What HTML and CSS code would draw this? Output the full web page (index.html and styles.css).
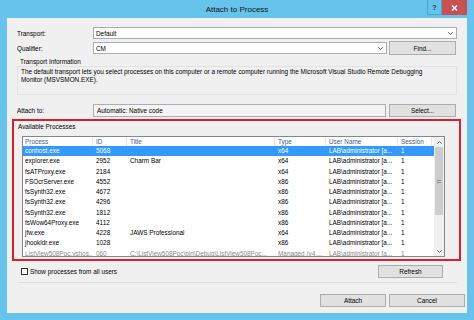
FILE: index.html
```html
<!DOCTYPE html>
<html lang="en">
<head>
    <meta charset="UTF-8">
    <meta name="viewport" content="width=device-width, initial-scale=1.0">
    <title>Attach to Process</title>
    <link rel="stylesheet" href="styles.css">
</head>
<body>
    <div class="window">
        <div class="titlebar">
            <span></span>
            <span class="title">Attach to Process</span>
            <div class="caption-buttons">
                <span class="cap-btn help">?</span>
                <span class="cap-btn close">
                    <svg width="7" height="6" viewBox="0 0 7 6"><path d="M1 0.5 L6 5.5 M6 0.5 L1 5.5" stroke="#fff" stroke-width="1.6"/></svg>
                </span>
            </div>
        </div>

        <div class="client">
            <div class="field-row row-transport">
                <span class="field-label">Transport:</span>
                <div class="combo combo-wide">
                    <span>Default</span>
                    <svg class="chev" width="5" height="3" viewBox="0 0 5 3"><path d="M0.3 0.3 L2.5 2.5 L4.7 0.3" fill="none" stroke="#444" stroke-width="0.9"/></svg>
                </div>
            </div>

            <div class="field-row row-qualifier">
                <span class="field-label">Qualifier:</span>
                <div class="combo combo-narrow">
                    <span>CM</span>
                    <svg class="chev" width="5" height="3" viewBox="0 0 5 3"><path d="M0.3 0.3 L2.5 2.5 L4.7 0.3" fill="none" stroke="#444" stroke-width="0.9"/></svg>
                </div>
                <button class="btn btn-side">Find...</button>
            </div>

            <div class="info-group">
                <div class="info-title">Transport Information</div>
                <div class="info-box">
                    The default transport lets you select processes on this computer or a remote computer running the Microsoft Visual Studio Remote Debugging<br>
                    Monitor (MSVSMON.EXE).
                </div>
            </div>

            <div class="field-row row-attach">
                <span class="field-label">Attach to:</span>
                <div class="textbox">Automatic: Native code</div>
                <button class="btn btn-side">Select...</button>
            </div>

            <div class="highlight">
                <div class="group-title">Available Processes</div>
                <div class="listview">
                    <div class="lv-main">
                        <div class="lv-header">
                            <span class="c-proc">Process</span>
                            <span class="c-id">ID</span>
                            <span class="c-title">Title</span>
                            <span class="c-type">Type</span>
                            <span class="c-user">User Name</span>
                            <span class="c-sess">Session</span>
                        </div>
                        <div class="lv-rows">
                            <div class="lv-row selected">
                                <span class="c-proc">conhost.exe</span><span class="c-id">5068</span><span class="c-title"></span><span class="c-type">x64</span><span class="c-user">LAB\administrator [a...</span><span class="c-sess">1</span>
                            </div>
                            <div class="lv-row">
                                <span class="c-proc">explorer.exe</span><span class="c-id">2952</span><span class="c-title">Charm Bar</span><span class="c-type">x64</span><span class="c-user">LAB\administrator [a...</span><span class="c-sess">1</span>
                            </div>
                            <div class="lv-row">
                                <span class="c-proc">fsATProxy.exe</span><span class="c-id">2184</span><span class="c-title"></span><span class="c-type">x64</span><span class="c-user">LAB\administrator [a...</span><span class="c-sess">1</span>
                            </div>
                            <div class="lv-row">
                                <span class="c-proc">FSOcrServer.exe</span><span class="c-id">4552</span><span class="c-title"></span><span class="c-type">x86</span><span class="c-user">LAB\administrator [a...</span><span class="c-sess">1</span>
                            </div>
                            <div class="lv-row">
                                <span class="c-proc">fsSynth32.exe</span><span class="c-id">4672</span><span class="c-title"></span><span class="c-type">x86</span><span class="c-user">LAB\administrator [a...</span><span class="c-sess">1</span>
                            </div>
                            <div class="lv-row">
                                <span class="c-proc">fsSynth32.exe</span><span class="c-id">4296</span><span class="c-title"></span><span class="c-type">x86</span><span class="c-user">LAB\administrator [a...</span><span class="c-sess">1</span>
                            </div>
                            <div class="lv-row">
                                <span class="c-proc">fsSynth32.exe</span><span class="c-id">1812</span><span class="c-title"></span><span class="c-type">x86</span><span class="c-user">LAB\administrator [a...</span><span class="c-sess">1</span>
                            </div>
                            <div class="lv-row">
                                <span class="c-proc">fsWow64Proxy.exe</span><span class="c-id">4112</span><span class="c-title"></span><span class="c-type">x86</span><span class="c-user">LAB\administrator [a...</span><span class="c-sess">1</span>
                            </div>
                            <div class="lv-row">
                                <span class="c-proc">jfw.exe</span><span class="c-id">4228</span><span class="c-title">JAWS Professional</span><span class="c-type">x64</span><span class="c-user">LAB\administrator [a...</span><span class="c-sess">1</span>
                            </div>
                            <div class="lv-row">
                                <span class="c-proc">jhookldr.exe</span><span class="c-id">1028</span><span class="c-title"></span><span class="c-type">x86</span><span class="c-user">LAB\administrator [a...</span><span class="c-sess">1</span>
                            </div>
                            <div class="lv-row cut">
                                <span class="c-proc">ListView508Poc.vshos...</span><span class="c-id">060</span><span class="c-title">C:\ListView508Poc\bin\Debug\ListView508Poc...</span><span class="c-type">Managed (v4....</span><span class="c-user">LAB\administrator [a...</span><span class="c-sess">1</span>
                            </div>
                        </div>
                    </div>
                    <div class="vscroll">
                        <div class="sb-arrow">
                            <svg width="5" height="3" viewBox="0 0 5 3"><path d="M0.3 2.7 L2.5 0.5 L4.7 2.7" fill="none" stroke="#606060" stroke-width="0.9"/></svg>
                        </div>
                        <div class="sb-track">
                            <div class="sb-thumb"><span class="grip"></span></div>
                        </div>
                        <div class="sb-arrow">
                            <svg width="5" height="3" viewBox="0 0 5 3"><path d="M0.3 0.3 L2.5 2.5 L4.7 0.3" fill="none" stroke="#606060" stroke-width="0.9"/></svg>
                        </div>
                    </div>
                </div>
            </div>

            <div class="options-row">
                <label class="check"><span class="checkbox"></span>Show processes from all users</label>
                <button class="btn btn-refresh">Refresh</button>
            </div>

            <div class="separator"></div>

            <div class="footer">
                <button class="btn btn-attach">Attach</button>
                <button class="btn btn-cancel">Cancel</button>
            </div>
        </div>
    </div>
</body>
</html>
```

FILE: styles.css
```css
* {
    box-sizing: border-box;
}
body {
    margin: 0;
    font-family: "Liberation Sans", Arial, sans-serif;
    font-size: 6.4px;
    color: #000;
    background: #fff;
}
.window {
    width: 474px;
    height: 320px;
    background-color: #66c4ec;
    padding: 0 7px 7px 7px;
    display: flex;
    flex-direction: column;
}
.titlebar {
    height: 18px;
    flex: none;
    display: grid;
    grid-template-columns: 1fr auto 1fr;
    align-items: center;
}
.title {
    font-size: 8px;
    color: #111;
    padding-top: 1px;
}
.caption-buttons {
    justify-self: end;
    align-self: start;
    display: flex;
}
.cap-btn {
    height: 15px;
    display: flex;
    align-items: center;
    justify-content: center;
}
.help {
    width: 15px;
    font-size: 7px;
    font-weight: bold;
    color: #1b3a4a;
    border: 1px solid #4aa3cc;
    border-top: none;
}
.close {
    width: 25px;
    background-color: #c75050;
}

.client {
    flex: 1;
    background-color: #f0f0f0;
    padding: 0 10px;
    display: flex;
    flex-direction: column;
}
.field-row {
    display: flex;
    align-items: center;
    height: 14px;
}
.row-transport {
    margin-top: 8px;
}
.row-qualifier {
    margin-top: 1px;
}
.row-attach {
    margin-top: 8px;
    height: 15px;
}
.field-label {
    width: 76px;
    flex: none;
}
.combo {
    height: 12px;
    background-color: #fff;
    border: 1px solid #abadb3;
    display: flex;
    align-items: center;
    justify-content: space-between;
    padding: 0 3px 0 2px;
}
.combo-wide {
    width: 364px;
}
.combo-narrow {
    width: 294px;
}
.textbox {
    width: 293px;
    height: 13px;
    background-color: #f4f4f4;
    border: 1px solid #abadb3;
    display: flex;
    align-items: center;
    padding-left: 3px;
}
.btn {
    font-family: inherit;
    font-size: 6.4px;
    color: #000;
    background-color: #e1e1e1;
    border: 1px solid #adadad;
    padding: 0;
    height: 13px;
}
.btn-side {
    width: 67px;
    margin-left: auto;
    margin-right: 1px;
}
.row-qualifier .btn-side {
    height: 14px;
}

.info-group {
    margin-top: 3px;
}
.info-title {
    line-height: 8px;
    padding-left: 3px;
}
.info-box {
    height: 29px;
    border: 1px solid #e2e2e2;
    padding: 1px 3px;
    line-height: 8px;
}

.highlight {
    margin-top: 1px;
    margin-left: -5px;
    width: 449px;
    height: 142px;
    flex: none;
    border: 2px solid #d8212c;
}
.group-title {
    margin-top: 2px;
    padding-left: 4px;
    line-height: 8px;
}
.listview {
    margin: 5px 0 0 8px;
    width: 423px;
    height: 121px;
    border: 1px solid #828790;
    background-color: #fff;
    display: flex;
}
.lv-main {
    width: 411px;
    overflow: hidden;
}
.lv-header,
.lv-row {
    display: flex;
    white-space: nowrap;
}
.lv-header {
    height: 9px;
    line-height: 9px;
    color: #4c607a;
}
.lv-header span {
    border-right: 1px solid #e5e5e5;
}
.lv-rows {
    height: 110px;
    overflow: hidden;
}
.lv-row {
    height: 10.25px;
    line-height: 10.25px;
}
.lv-row span,
.lv-header span {
    overflow: hidden;
    padding-left: 3px;
    flex: none;
}
.c-proc { width: 70px; padding-left: 2px !important; }
.c-id { width: 34px; }
.c-title { width: 148px; }
.c-type { width: 51px; }
.c-user { width: 72px; }
.c-sess { width: 34px; }
.lv-row.selected {
    background-color: #3399ff;
    color: #fff;
}
.lv-row.cut {
    color: #8a8a8a;
}

.vscroll {
    width: 10px;
    display: flex;
    flex-direction: column;
    background-color: #f0f0f0;
}
.sb-arrow {
    height: 10px;
    display: flex;
    align-items: center;
    justify-content: center;
}
.sb-track {
    flex: 1;
}
.sb-thumb {
    margin: 0 1px;
    height: 68px;
    background-color: #cdcdcd;
    display: flex;
    align-items: center;
    justify-content: center;
}
.grip {
    width: 4px;
    height: 3px;
    border-top: 1px solid #8f8f8f;
    border-bottom: 1px solid #8f8f8f;
}

.options-row {
    margin-top: 3px;
    height: 14px;
    display: flex;
    align-items: center;
    justify-content: space-between;
}
.check {
    display: flex;
    align-items: center;
    margin-left: 4px;
}
.checkbox {
    width: 7px;
    height: 7px;
    border: 1px solid #333;
    background-color: #fff;
    margin-right: 2px;
}
.btn-refresh {
    width: 65px;
    margin-right: 14px;
}
.separator {
    margin-top: 4px;
    height: 1px;
    background-color: #e0e0e0;
}
.footer {
    margin-top: 11px;
    margin-right: -8px;
    display: flex;
    justify-content: flex-end;
    gap: 3px;
}
.btn-attach {
    width: 66px;
}
.btn-cancel {
    width: 76px;
}
```
